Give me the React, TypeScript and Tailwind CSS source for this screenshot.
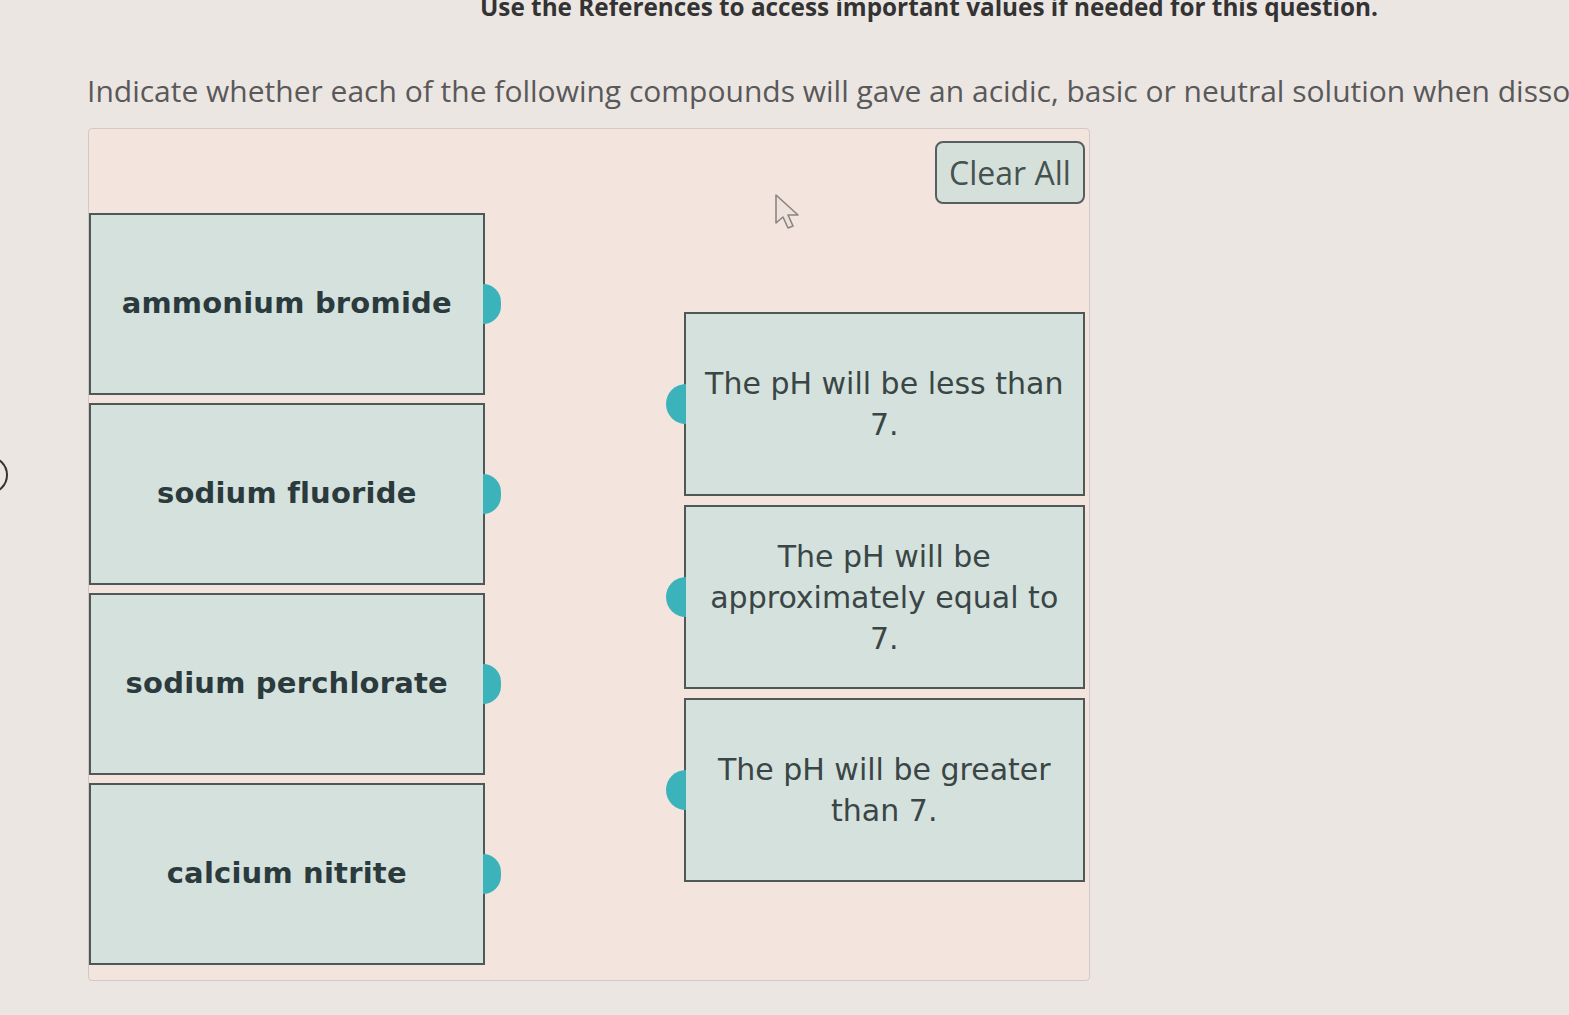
const compounds = ["ammonium bromide", "sodium fluoride", "sodium perchlorate", "calcium nitrite"];

const answers = [
  ["The pH will be less than", "7."],
  ["The pH will be", "approximately equal to", "7."],
  ["The pH will be greater", "than 7."],
];

function LeftCard({ label }: { label: string }) {
  return (
    <div className="relative flex h-[182px] items-center justify-center border-2 border-[#4f5857] bg-[#d5e1dc]">
      <span className="text-[29px] font-bold tracking-[0.2px] text-[#2b3b3d] [font-family:'DejaVu_Sans',Verdana,sans-serif]">
        {label}
      </span>
      <div className="absolute left-full top-1/2 h-[40px] w-[18px] -translate-y-1/2 rounded-r-full bg-[#3cb3bb]" />
    </div>
  );
}

function RightCard({ lines }: { lines: string[] }) {
  return (
    <div className="relative flex h-[184px] flex-col items-center justify-center border-2 border-[#4f5857] bg-[#d5e1dc] text-[30px] leading-[41px] text-[#3a4646] [font-family:'DejaVu_Sans',Verdana,sans-serif]">
      {lines.map((l) => (
        <span key={l} className="block whitespace-nowrap">
          {l}
        </span>
      ))}
      <div className="absolute right-full top-1/2 h-[40px] w-[20px] -translate-y-1/2 rounded-l-full bg-[#3cb3bb]" />
    </div>
  );
}

export default function App() {
  return (
    <div className="relative h-[1015px] w-[1569px] overflow-hidden bg-[#ece6e3] [font-family:'Open_Sans',sans-serif]">
      <div className="-mt-[7px] pl-[480px] text-[24.3px] font-bold leading-[28px] whitespace-nowrap text-[#333]">
        Use the References to access important values if needed for this question.
      </div>

      <div className="mt-[51px] pl-[87px] text-[30px] leading-[38px] whitespace-nowrap text-[#595959]">
        Indicate whether each of the following compounds will gave an acidic, basic or neutral solution when dissolved in water.
      </div>

      <div className="ml-[88px] mt-[18px] flex w-[1002px] flex-col rounded-[4px] border border-[#d2c9c4] bg-[#f3e4dd] pb-[15px] pr-[4px]">
        <div className="flex justify-end pt-[12px]">
          <button className="h-[63px] w-[150px] rounded-[8px] border-2 border-[#55605e] bg-[#d5e0db] text-[32px] text-[#45524f]">
            Clear All
          </button>
        </div>

        <div className="flex">
          <div className="mt-[9px] flex w-[396px] flex-col gap-[8px]">
            {compounds.map((c) => (
              <LeftCard key={c} label={c} />
            ))}
          </div>
          <div className="ml-[199px] mt-[108px] flex w-[402px] flex-col gap-[9px]">
            {answers.map((a) => (
              <RightCard key={a[0]} lines={a} />
            ))}
          </div>
        </div>
      </div>

      {/* mouse pointer */}
      <svg className="absolute left-[774px] top-[193px]" width="30" height="40" viewBox="0 0 30 40">
        <path d="M2 2 L2 30 L9 24 L14 35 L19 33 L14 22 L24 22 Z" fill="#ede2dc" stroke="#8a8583" strokeWidth="1.6" strokeLinejoin="round" />
      </svg>

      {/* edge of something off-screen on the left */}
      <div className="absolute -left-[30px] top-[456px] h-[38px] w-[38px] rounded-full border-2 border-[#333]" />
    </div>
  );
}
